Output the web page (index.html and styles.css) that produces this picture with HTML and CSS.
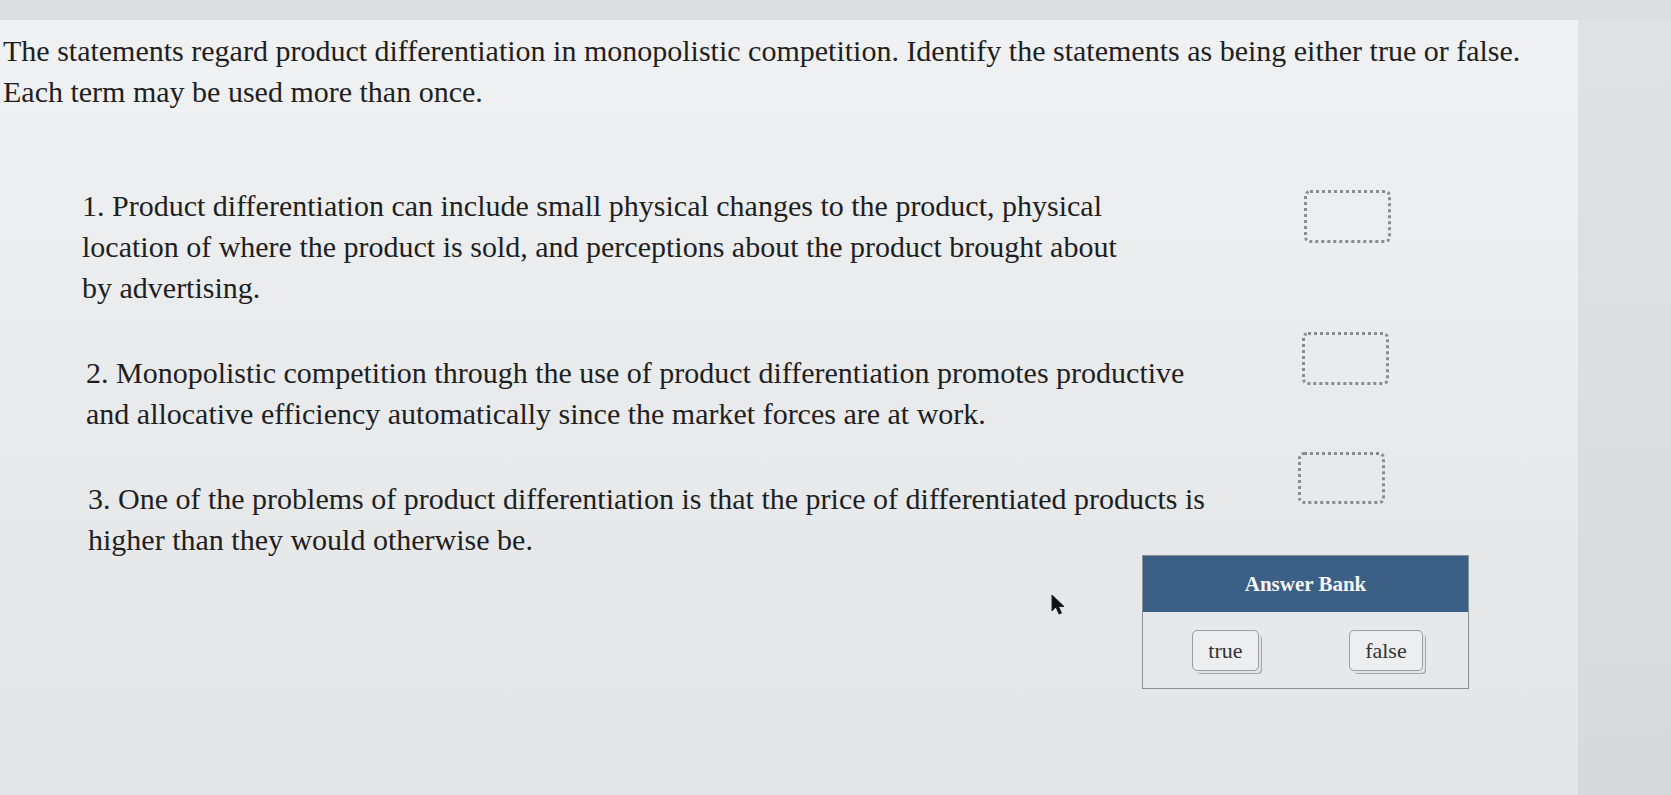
FILE: index.html
```html
<!DOCTYPE html>
<html lang="en">
<head>
<meta charset="utf-8">
<title>Product differentiation</title>
<link rel="stylesheet" href="styles.css">
</head>
<body>
<div class="screen">
  <main class="panel">
    <p class="prompt">The statements regard product differentiation in monopolistic competition. Identify the statements as being either true or false. Each term may be used more than once.</p>
    <div class="question">
      <div class="statements">
        <p class="statement s1">1. Product differentiation can include small physical changes to the product, physical<br>location of where the product is sold, and perceptions about the product brought about<br>by advertising.</p>
        <p class="statement s2">2. Monopolistic competition through the use of product differentiation promotes productive<br>and allocative efficiency automatically since the market forces are at work.</p>
        <p class="statement s3">3. One of the problems of product differentiation is that the price of differentiated products is<br>higher than they would otherwise be.</p>
      </div>
      <div class="side">
        <div class="drop d1"></div>
        <div class="drop d2"></div>
        <div class="drop d3"></div>
        <section class="bank">
          <h2 class="bank-title">Answer Bank</h2>
          <div class="bank-body">
            <span class="chip">true</span>
            <span class="chip">false</span>
          </div>
        </section>
      </div>
    </div>
  </main>
  <div class="gutter"></div>
</div>
<svg class="cursor" width="16" height="22" viewBox="0 0 16 22"><path d="M1 1 L1 17 L5 13 L8 20 L10.5 19 L7.5 12.5 L13 12.5 Z" fill="#111" stroke="#222" stroke-width="1"/></svg>
</body>
</html>
```
FILE: styles.css
```css
html, body {
  margin: 0;
  padding: 0;
}
body {
  width: 1671px;
  height: 795px;
  overflow: hidden;
  background: #dcdedf;
  font-family: "Liberation Serif", "Times New Roman", serif;
  color: #1f1f1f;
  position: relative;
}
.screen {
  display: flex;
  height: 775px;
  margin-top: 20px;
}
.panel {
  flex: 0 0 1578px;
  background: linear-gradient(180deg, #eff1f2 0%, #e8eaec 50%, #e3e5e7 100%);
  padding-top: 10px;
  box-sizing: border-box;
}
.gutter {
  flex: 1;
  background: linear-gradient(180deg, #dfe1e3 0%, #d7dadc 100%);
}
.prompt {
  margin: 0;
  padding-left: 3px;
  padding-right: 20px;
  font-size: 30px;
  line-height: 41px;
}
.question {
  display: flex;
  margin-top: 73px;
}
.statements {
  flex: 0 0 1142px;
  min-width: 0;
  padding-left: 82px;
  box-sizing: border-box;
  display: flex;
  flex-direction: column;
  gap: 44px;
}
.statement {
  margin: 0;
  font-size: 30px;
  line-height: 41px;
  white-space: nowrap;
}
.s2 { padding-left: 4px; }
.s3 { padding-left: 6px; }
.side {
  flex: 0 0 327px;
  display: flex;
  flex-direction: column;
  padding-top: 5px;
}
.drop {
  width: 87px;
  height: 53px;
  margin-left: 162px;
  border: 3px dotted #8a8c8e;
  border-radius: 6px;
  box-sizing: border-box;
}
.d2 { margin-top: 89px; margin-left: 160px; }
.d3 { margin-top: 67px; margin-left: 156px; height: 52px; }
.bank {
  margin-top: 51px;
  border: 1px solid #8c8f92;
  background: #e6e8ea;
}
.bank-title {
  margin: 0;
  height: 56px;
  background: #3c5f86;
  color: #f4f6f8;
  font-size: 21px;
  font-weight: bold;
  line-height: 56px;
  text-align: center;
}
.bank-body {
  display: flex;
  justify-content: space-around;
  align-items: center;
  height: 76px;
  padding-left: 4px;
}
.chip {
  display: inline-block;
  padding: 0 15px;
  height: 41px;
  line-height: 39px;
  font-size: 22px;
  color: #333;
  background: #eceeef;
  border: 1.5px solid #9a9c9e;
  border-radius: 5px;
  box-sizing: border-box;
  box-shadow: 3px 3px 0 -1px #e2e4e6, 4px 4px 0 -1px #a3a5a7;
}
.cursor {
  position: absolute;
  left: 1051px;
  top: 594px;
}
```
